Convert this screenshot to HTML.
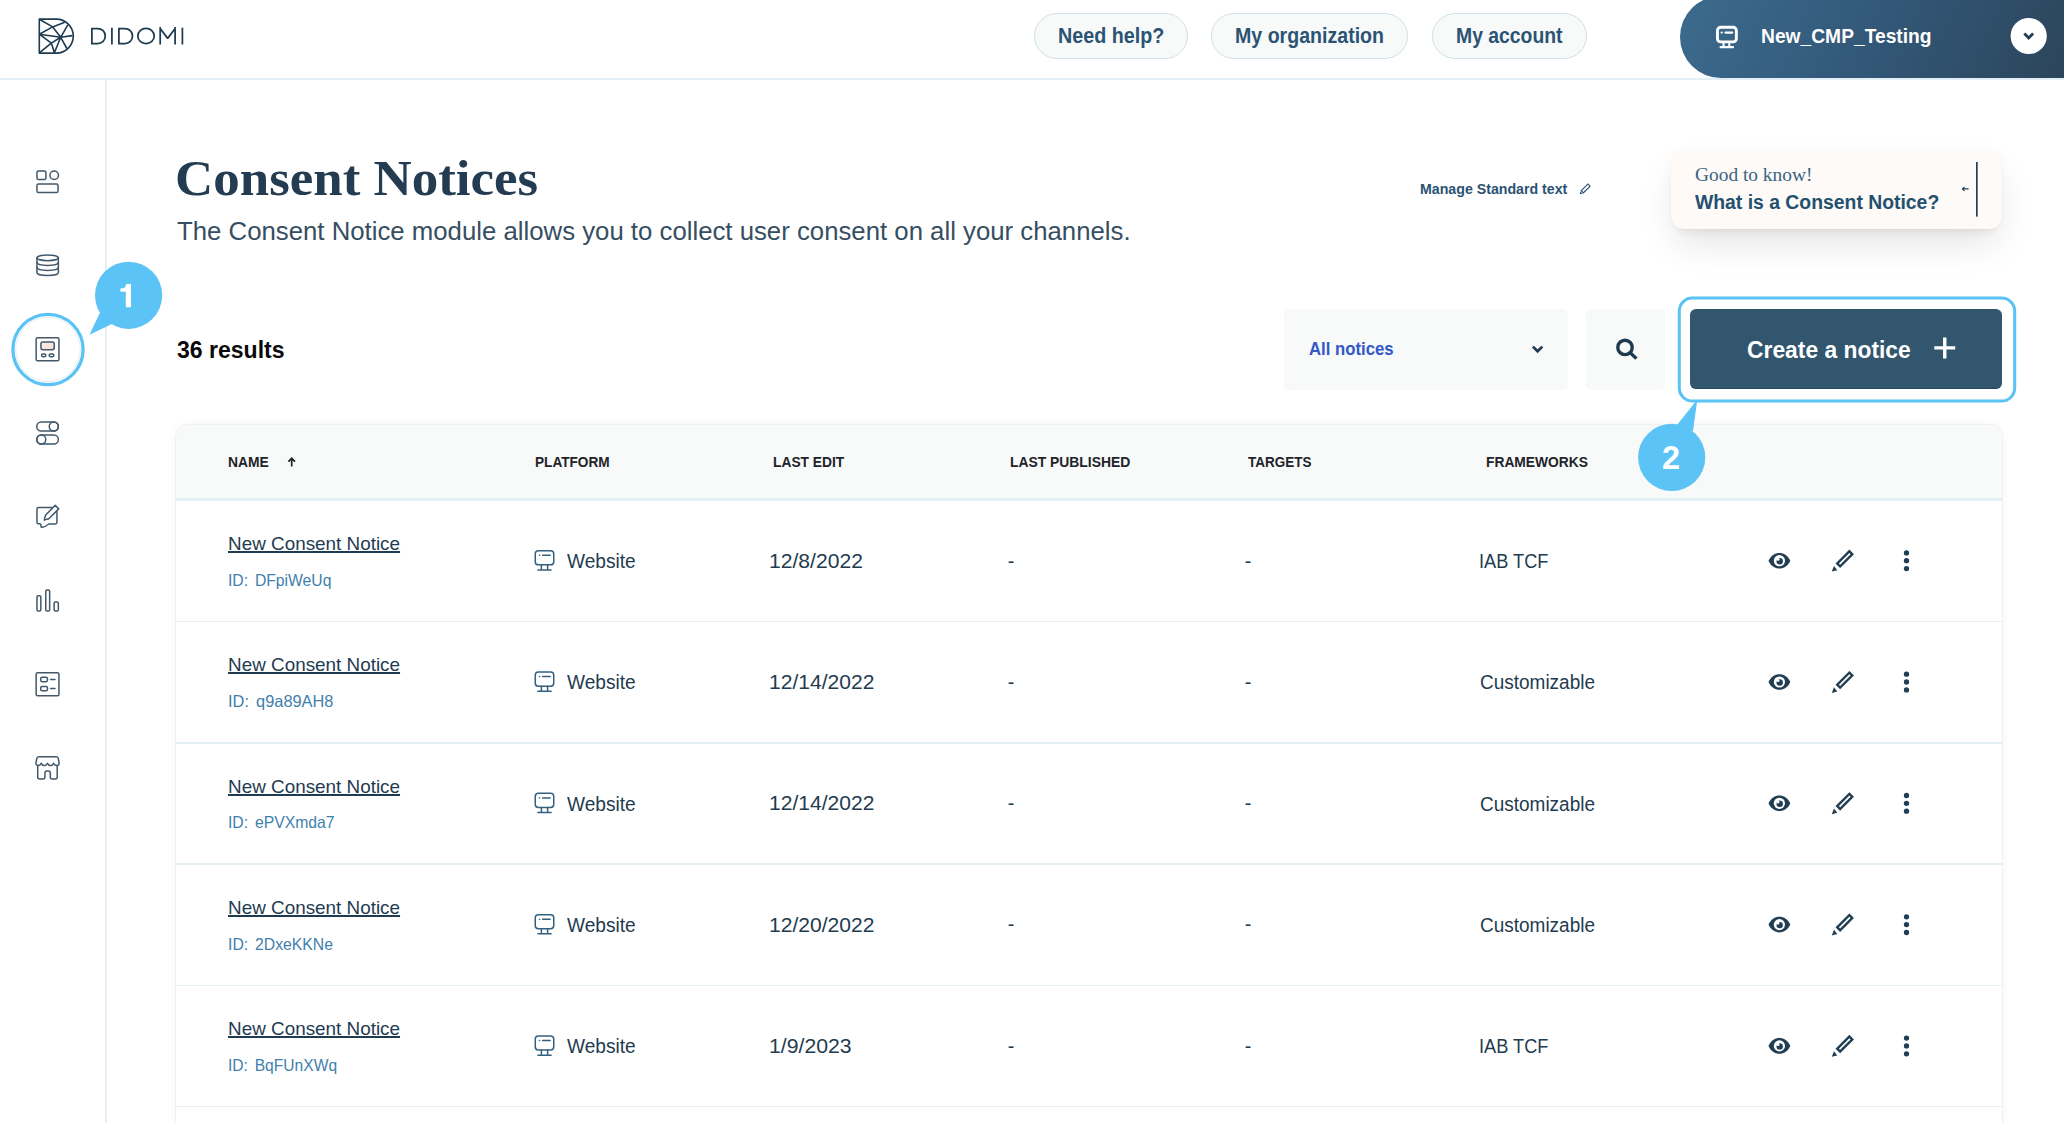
<!DOCTYPE html>
<html><head><meta charset="utf-8"><title>Consent Notices</title><style>
*{margin:0;padding:0;box-sizing:border-box}
html,body{width:2064px;height:1123px;overflow:hidden;background:#fff}
body{position:relative;font-family:"Liberation Sans",sans-serif}
.t{position:absolute;white-space:nowrap;transform-origin:0 0}
.b{position:absolute}
.ov{position:absolute;left:0;top:0;pointer-events:none}
</style></head>
<body>
<div class="b" style="left:0;top:77.5px;width:2064px;height:2px;background:#e3eff6"></div><div class="b" style="left:105.2px;top:79px;width:2px;height:1100px;background:#e6f0f6"></div><div class="b" style="left:1034px;top:13.2px;width:154.0px;height:45.8px;border:1.7px solid #d0e1ea;border-radius:23px;background:#f8fafa"></div><div class="b" style="left:1211.2px;top:13.2px;width:197.3px;height:45.8px;border:1.7px solid #d0e1ea;border-radius:23px;background:#f8fafa"></div><div class="b" style="left:1432.2px;top:13.2px;width:155.0px;height:45.8px;border:1.7px solid #d0e1ea;border-radius:23px;background:#f8fafa"></div><div class="b" style="left:1679.7px;top:-4px;width:400px;height:81.5px;border-radius:41px 0 0 41px;background:linear-gradient(115deg,#3c6b8e 0%,#33597a 45%,#2b4459 100%)"></div><div class="b" style="left:1671px;top:149.3px;width:331px;height:80px;border-radius:13px;background:#fdfaf8;box-shadow:0 18px 36px -6px rgba(30,30,30,0.13),0 6px 10px -4px rgba(0,0,0,0.08),0 0 2px rgba(0,0,0,0.03)"></div><div class="b" style="left:1284px;top:308.6px;width:284.3px;height:81px;border-radius:6px;background:#f8f9f9;box-shadow:0 0 1px rgba(0,0,0,0.06)"></div><div class="b" style="left:1586.2px;top:308.6px;width:79px;height:81px;border-radius:6px;background:#f8f9f9;box-shadow:0 0 1px rgba(0,0,0,0.06)"></div><div class="b" style="left:1690px;top:308.8px;width:312px;height:80.2px;border-radius:6px;background:#33566f;box-shadow:inset 0 -1px 0 rgba(20,50,80,0.35)"></div><div class="b" style="left:175.6px;top:425.3px;width:1826.6px;height:800px;border-radius:13px;background:#fff;box-shadow:0 0 0 1px rgba(0,0,0,0.035),0 0 8px rgba(0,0,0,0.06)"></div><div class="b" style="left:175.6px;top:425.3px;width:1826.6px;height:73px;border-radius:13px 13px 0 0;background:#f8f9f9"></div><div class="b" style="left:175.6px;top:498.2px;width:1826.6px;height:2.4px;background:#e3eff6"></div><div class="b" style="left:175.6px;top:620.60px;width:1826.6px;height:1.7px;background:#e3eef5"></div><div class="b" style="left:175.6px;top:741.90px;width:1826.6px;height:1.7px;background:#e3eef5"></div><div class="b" style="left:175.6px;top:863.20px;width:1826.6px;height:1.7px;background:#e3eef5"></div><div class="b" style="left:175.6px;top:984.50px;width:1826.6px;height:1.7px;background:#e3eef5"></div><div class="b" style="left:175.6px;top:1105.80px;width:1826.6px;height:1.7px;background:#e3eef5"></div>
<div id="h_help" class="t" style="left:1058.19px;top:25.31px;font-size:21.6px;line-height:21.6px;font-family:'Liberation Sans', sans-serif;font-weight:700;color:#2b5373;transform:scaleX(0.9130);">Need help?</div><div id="h_org" class="t" style="left:1235.21px;top:25.31px;font-size:21.6px;line-height:21.6px;font-family:'Liberation Sans', sans-serif;font-weight:700;color:#2b5373;transform:scaleX(0.9067);">My organization</div><div id="h_acc" class="t" style="left:1455.79px;top:25.31px;font-size:21.6px;line-height:21.6px;font-family:'Liberation Sans', sans-serif;font-weight:700;color:#2b5373;transform:scaleX(0.8967);">My account</div><div id="h_cmp" class="t" style="left:1760.61px;top:25.74px;font-size:20.5px;line-height:20.5px;font-family:'Liberation Sans', sans-serif;font-weight:700;color:#ffffff;transform:scaleX(0.9379);">New_CMP_Testing</div><div id="title" class="t" style="left:174.86px;top:152.81px;font-size:50.5px;line-height:50.5px;font-family:'Liberation Serif', serif;font-weight:700;color:#233c51;transform:scaleX(1.0482);">Consent Notices</div><div id="sub" class="t" style="left:177.22px;top:218.22px;font-size:26.2px;line-height:26.2px;font-family:'Liberation Sans', sans-serif;font-weight:400;color:#364e61;transform:scaleX(0.9836);">The Consent Notice module allows you to collect user consent on all your channels.</div><div id="manage" class="t" style="left:1420.22px;top:181.40px;font-size:15px;line-height:15px;font-family:'Liberation Sans', sans-serif;font-weight:700;color:#2b5272;transform:scaleX(0.9451);">Manage Standard text</div><div id="gtk" class="t" style="left:1694.63px;top:165.56px;font-size:18.8px;line-height:18.8px;font-family:'Liberation Serif', serif;font-weight:400;color:#3b6282;transform:scaleX(1.0321);">Good to know!</div><div id="what" class="t" style="left:1695.09px;top:191.71px;font-size:20.3px;line-height:20.3px;font-family:'Liberation Sans', sans-serif;font-weight:700;color:#24506f;transform:scaleX(0.9547);">What is a Consent Notice?</div><div id="results" class="t" style="left:177.46px;top:337.81px;font-size:24.2px;line-height:24.2px;font-family:'Liberation Sans', sans-serif;font-weight:700;color:#0a0a0a;transform:scaleX(0.9521);">36 results</div><div id="allnot" class="t" style="left:1308.70px;top:340.24px;font-size:18.5px;line-height:18.5px;font-family:'Liberation Sans', sans-serif;font-weight:700;color:#3157c8;transform:scaleX(0.9035);">All notices</div><div id="create" class="t" style="left:1747.36px;top:338.56px;font-size:23.2px;line-height:23.2px;font-family:'Liberation Sans', sans-serif;font-weight:700;color:#ffffff;transform:scaleX(0.9850);">Create a notice</div><div id="th_name" class="t" style="left:228.22px;top:454.52px;font-size:14.5px;line-height:14.5px;font-family:'Liberation Sans', sans-serif;font-weight:700;color:#1e2429;transform:scaleX(0.9562);">NAME</div><div id="th_plat" class="t" style="left:535.20px;top:454.52px;font-size:14.5px;line-height:14.5px;font-family:'Liberation Sans', sans-serif;font-weight:700;color:#1e2429;transform:scaleX(0.9393);">PLATFORM</div><div id="th_edit" class="t" style="left:773.02px;top:454.52px;font-size:14.5px;line-height:14.5px;font-family:'Liberation Sans', sans-serif;font-weight:700;color:#1e2429;transform:scaleX(0.9513);">LAST EDIT</div><div id="th_pub" class="t" style="left:1010.27px;top:454.52px;font-size:14.5px;line-height:14.5px;font-family:'Liberation Sans', sans-serif;font-weight:700;color:#1e2429;transform:scaleX(0.9567);">LAST PUBLISHED</div><div id="th_tgt" class="t" style="left:1248.15px;top:454.52px;font-size:14.5px;line-height:14.5px;font-family:'Liberation Sans', sans-serif;font-weight:700;color:#1e2429;transform:scaleX(0.9297);">TARGETS</div><div id="th_fw" class="t" style="left:1485.71px;top:454.52px;font-size:14.5px;line-height:14.5px;font-family:'Liberation Sans', sans-serif;font-weight:700;color:#1e2429;transform:scaleX(0.9509);">FRAMEWORKS</div><div id="r0_name" class="t" style="left:227.90px;top:533.91px;font-size:19.0px;line-height:19.0px;font-family:'Liberation Sans', sans-serif;font-weight:400;color:#1f3b51;transform:scaleX(0.9934);text-decoration:underline;text-decoration-thickness:1.6px;text-underline-offset:1.2px;">New Consent Notice</div><div id="r0_id" class="t" style="left:227.72px;top:571.63px;font-size:16.5px;line-height:16.5px;font-family:'Liberation Sans', sans-serif;font-weight:400;color:#3f7fad;transform:scaleX(0.9519);word-spacing:2.6px;">ID: DFpiWeUq</div><div id="r0_web" class="t" style="left:567.27px;top:551.92px;font-size:19.7px;line-height:19.7px;font-family:'Liberation Sans', sans-serif;font-weight:400;color:#233b4f;transform:scaleX(0.9706);">Website</div><div id="r0_date" class="t" style="left:769.46px;top:551.62px;font-size:19.7px;line-height:19.7px;font-family:'Liberation Sans', sans-serif;font-weight:400;color:#233b4f;transform:scaleX(1.0725);">12/8/2022</div><div id="r0_d1" class="t" style="left:1007.80px;top:551.52px;font-size:19.7px;line-height:19.7px;font-family:'Liberation Sans', sans-serif;font-weight:400;color:#233b4f;">-</div><div id="r0_d2" class="t" style="left:1244.70px;top:551.52px;font-size:19.7px;line-height:19.7px;font-family:'Liberation Sans', sans-serif;font-weight:400;color:#233b4f;">-</div><div id="r0_fw" class="t" style="left:1479.35px;top:552.12px;font-size:19.7px;line-height:19.7px;font-family:'Liberation Sans', sans-serif;font-weight:400;color:#233b4f;transform:scaleX(0.9237);">IAB TCF</div><div id="r1_name" class="t" style="left:227.90px;top:655.21px;font-size:19.0px;line-height:19.0px;font-family:'Liberation Sans', sans-serif;font-weight:400;color:#1f3b51;transform:scaleX(0.9934);text-decoration:underline;text-decoration-thickness:1.6px;text-underline-offset:1.2px;">New Consent Notice</div><div id="r1_id" class="t" style="left:227.69px;top:692.93px;font-size:16.5px;line-height:16.5px;font-family:'Liberation Sans', sans-serif;font-weight:400;color:#3f7fad;transform:scaleX(0.9926);word-spacing:2.6px;">ID: q9a89AH8</div><div id="r1_web" class="t" style="left:567.27px;top:673.22px;font-size:19.7px;line-height:19.7px;font-family:'Liberation Sans', sans-serif;font-weight:400;color:#233b4f;transform:scaleX(0.9706);">Website</div><div id="r1_date" class="t" style="left:769.46px;top:672.92px;font-size:19.7px;line-height:19.7px;font-family:'Liberation Sans', sans-serif;font-weight:400;color:#233b4f;transform:scaleX(1.0695);">12/14/2022</div><div id="r1_d1" class="t" style="left:1007.80px;top:672.82px;font-size:19.7px;line-height:19.7px;font-family:'Liberation Sans', sans-serif;font-weight:400;color:#233b4f;">-</div><div id="r1_d2" class="t" style="left:1244.70px;top:672.82px;font-size:19.7px;line-height:19.7px;font-family:'Liberation Sans', sans-serif;font-weight:400;color:#233b4f;">-</div><div id="r1_fw" class="t" style="left:1479.88px;top:673.42px;font-size:19.7px;line-height:19.7px;font-family:'Liberation Sans', sans-serif;font-weight:400;color:#233b4f;transform:scaleX(0.9642);">Customizable</div><div id="r2_name" class="t" style="left:227.90px;top:776.51px;font-size:19.0px;line-height:19.0px;font-family:'Liberation Sans', sans-serif;font-weight:400;color:#1f3b51;transform:scaleX(0.9934);text-decoration:underline;text-decoration-thickness:1.6px;text-underline-offset:1.2px;">New Consent Notice</div><div id="r2_id" class="t" style="left:227.72px;top:814.23px;font-size:16.5px;line-height:16.5px;font-family:'Liberation Sans', sans-serif;font-weight:400;color:#3f7fad;transform:scaleX(0.9528);word-spacing:2.6px;">ID: ePVXmda7</div><div id="r2_web" class="t" style="left:567.27px;top:794.52px;font-size:19.7px;line-height:19.7px;font-family:'Liberation Sans', sans-serif;font-weight:400;color:#233b4f;transform:scaleX(0.9706);">Website</div><div id="r2_date" class="t" style="left:769.46px;top:794.22px;font-size:19.7px;line-height:19.7px;font-family:'Liberation Sans', sans-serif;font-weight:400;color:#233b4f;transform:scaleX(1.0695);">12/14/2022</div><div id="r2_d1" class="t" style="left:1007.80px;top:794.12px;font-size:19.7px;line-height:19.7px;font-family:'Liberation Sans', sans-serif;font-weight:400;color:#233b4f;">-</div><div id="r2_d2" class="t" style="left:1244.70px;top:794.12px;font-size:19.7px;line-height:19.7px;font-family:'Liberation Sans', sans-serif;font-weight:400;color:#233b4f;">-</div><div id="r2_fw" class="t" style="left:1479.88px;top:794.72px;font-size:19.7px;line-height:19.7px;font-family:'Liberation Sans', sans-serif;font-weight:400;color:#233b4f;transform:scaleX(0.9642);">Customizable</div><div id="r3_name" class="t" style="left:227.90px;top:897.81px;font-size:19.0px;line-height:19.0px;font-family:'Liberation Sans', sans-serif;font-weight:400;color:#1f3b51;transform:scaleX(0.9934);text-decoration:underline;text-decoration-thickness:1.6px;text-underline-offset:1.2px;">New Consent Notice</div><div id="r3_id" class="t" style="left:227.72px;top:935.53px;font-size:16.5px;line-height:16.5px;font-family:'Liberation Sans', sans-serif;font-weight:400;color:#3f7fad;transform:scaleX(0.9554);word-spacing:2.6px;">ID: 2DxeKKNe</div><div id="r3_web" class="t" style="left:567.27px;top:915.82px;font-size:19.7px;line-height:19.7px;font-family:'Liberation Sans', sans-serif;font-weight:400;color:#233b4f;transform:scaleX(0.9706);">Website</div><div id="r3_date" class="t" style="left:769.47px;top:915.52px;font-size:19.7px;line-height:19.7px;font-family:'Liberation Sans', sans-serif;font-weight:400;color:#233b4f;transform:scaleX(1.0694);">12/20/2022</div><div id="r3_d1" class="t" style="left:1007.80px;top:915.42px;font-size:19.7px;line-height:19.7px;font-family:'Liberation Sans', sans-serif;font-weight:400;color:#233b4f;">-</div><div id="r3_d2" class="t" style="left:1244.70px;top:915.42px;font-size:19.7px;line-height:19.7px;font-family:'Liberation Sans', sans-serif;font-weight:400;color:#233b4f;">-</div><div id="r3_fw" class="t" style="left:1479.88px;top:916.02px;font-size:19.7px;line-height:19.7px;font-family:'Liberation Sans', sans-serif;font-weight:400;color:#233b4f;transform:scaleX(0.9642);">Customizable</div><div id="r4_name" class="t" style="left:227.90px;top:1019.11px;font-size:19.0px;line-height:19.0px;font-family:'Liberation Sans', sans-serif;font-weight:400;color:#1f3b51;transform:scaleX(0.9934);text-decoration:underline;text-decoration-thickness:1.6px;text-underline-offset:1.2px;">New Consent Notice</div><div id="r4_id" class="t" style="left:227.73px;top:1056.83px;font-size:16.5px;line-height:16.5px;font-family:'Liberation Sans', sans-serif;font-weight:400;color:#3f7fad;transform:scaleX(0.9452);word-spacing:2.6px;">ID: BqFUnXWq</div><div id="r4_web" class="t" style="left:567.27px;top:1037.12px;font-size:19.7px;line-height:19.7px;font-family:'Liberation Sans', sans-serif;font-weight:400;color:#233b4f;transform:scaleX(0.9706);">Website</div><div id="r4_date" class="t" style="left:769.45px;top:1036.82px;font-size:19.7px;line-height:19.7px;font-family:'Liberation Sans', sans-serif;font-weight:400;color:#233b4f;transform:scaleX(1.0785);">1/9/2023</div><div id="r4_d1" class="t" style="left:1007.80px;top:1036.72px;font-size:19.7px;line-height:19.7px;font-family:'Liberation Sans', sans-serif;font-weight:400;color:#233b4f;">-</div><div id="r4_d2" class="t" style="left:1244.70px;top:1036.72px;font-size:19.7px;line-height:19.7px;font-family:'Liberation Sans', sans-serif;font-weight:400;color:#233b4f;">-</div><div id="r4_fw" class="t" style="left:1479.35px;top:1037.32px;font-size:19.7px;line-height:19.7px;font-family:'Liberation Sans', sans-serif;font-weight:400;color:#233b4f;transform:scaleX(0.9237);">IAB TCF</div>
<svg class="ov" width="2064" height="1123" viewBox="0 0 2064 1123"><g fill="none" stroke="#1f3b50" stroke-width="1.6" stroke-linejoin="round"><path d="M39.3,19.1 H56.3 A17,17 0 0 1 56.3,53.1 H39.3 Z"/><path d="M39.30,19.30 L52.70,26.90 M52.70,26.90 L64.70,22.20 M39.30,34.20 L52.70,26.90 M52.70,26.90 L60.70,37.30 M67.80,24.90 L60.70,37.30 M39.30,34.20 L60.70,37.30 M60.70,37.30 L72.50,35.60 M39.30,34.20 L51.30,43.10 M51.30,43.10 L60.70,37.30 M39.30,52.90 L51.30,43.10 M51.30,43.10 L54.40,52.70 M60.70,37.30 L54.40,52.70 M60.70,37.30 L66.90,48.50"/></g><g fill="none" stroke="#1f3b50" stroke-width="1.75"><path d="M91.9,28.5 H97.7 A7.6,7.6 0 0 1 97.7,43.7 H91.9 Z"/><path d="M111.9,27.7 V44.5"/><path d="M118.9,28.5 H124.9 A7.6,7.6 0 0 1 124.9,43.7 H118.9 Z"/><ellipse cx="146" cy="36.1" rx="8.2" ry="7.6"/><path d="M160.2,44.4 V28.5 L167.65,38.4 L175.1,28.5 V44.4" stroke-linejoin="bevel"/><path d="M159.33,27.75 H161.05 M174.25,27.75 H175.97" stroke-width="1.5"/><path d="M182.4,27.7 V44.5"/></g><g fill="none" stroke="#42586a" stroke-width="1.5" stroke-linecap="round" stroke-linejoin="round"><rect x="36.95" y="171.05" width="9.0" height="8.5" rx="1.6"/><circle cx="54.2" cy="175.3" r="4.3"/><rect x="36.95" y="184.05" width="21.1" height="8.5" rx="1.6"/></g><g fill="none" stroke="#42586a" stroke-width="1.5" stroke-linecap="round" stroke-linejoin="round"><ellipse cx="47.65" cy="257.8" rx="10.7" ry="2.85"/><path d="M36.95,257.8 V272.7 A10.7,2.85 0 0 0 58.35,272.7 V257.8"/><path d="M36.95,262.6 A10.7,2.85 0 0 0 58.35,262.6"/><path d="M36.95,267.6 A10.7,2.85 0 0 0 58.35,267.6"/></g><circle cx="48" cy="349.5" r="35.1" fill="#fff" stroke="#5bc2f4" stroke-width="3.3"/><circle cx="48" cy="349.5" r="32.3" fill="none" stroke="#dfeef8" stroke-width="1"/><defs><linearGradient id="pk" x1="0" y1="0" x2="1" y2="1"><stop offset="0" stop-color="#fdf1ec"/><stop offset="1" stop-color="#f5d9cf"/></linearGradient></defs><g fill="none" stroke="#42586a" stroke-width="1.5" stroke-linecap="round" stroke-linejoin="round"><rect x="36.15" y="337.75" width="22.8" height="23" rx="1.6"/><rect x="40.95" y="341.95" width="13.3" height="7.7" rx="1.8" fill="url(#pk)"/><rect x="41.55" y="353.95" width="4.3" height="2.7" rx="1.35"/><rect x="49.15" y="353.95" width="4.7" height="2.7" rx="1.35"/></g><g fill="none" stroke="#42586a" stroke-width="1.5" stroke-linecap="round" stroke-linejoin="round"><rect x="36.75" y="421.95" width="21.6" height="9.1" rx="4.55"/><circle cx="53.8" cy="426.5" r="4.55"/><rect x="36.75" y="434.95" width="21.6" height="9.0" rx="4.5"/><circle cx="41.3" cy="439.45" r="4.5"/></g><g fill="none" stroke="#42586a" stroke-width="1.5" stroke-linecap="round" stroke-linejoin="round"><path d="M52.2,507.55 H38.6 Q36.95,507.55 36.95,509.2 V522.2 Q36.95,523.85 38.6,523.85 H40.2 Q41.4,524.2 40.9,525.7 Q40.6,527.3 42.6,527.2 Q44.5,527 49,524 H55.3 Q56.95,523.85 56.95,522.2 V511.6"/><path d="M55.2,505.4 L58.7,508.9 L49.3,518.3 Q48.3,519.1 46.8,519.2 Q45.6,519.5 44.3,520.1 Q44.6,518.6 44.9,517.2 Q45.2,515.8 46.1,514.5 Z"/></g><g fill="none" stroke="#42586a" stroke-width="1.5" stroke-linecap="round" stroke-linejoin="round"><rect x="36.95" y="595.75" width="3.9" height="15.2" rx="1.3"/><rect x="45.75" y="589.95" width="3.9" height="21" rx="1.3"/><rect x="54.15" y="601.95" width="4.2" height="9" rx="1.3"/></g><g fill="none" stroke="#42586a" stroke-width="1.5" stroke-linecap="round" stroke-linejoin="round"><rect x="36.15" y="672.75" width="22.8" height="23" rx="1.6"/><rect x="40.75" y="677.15" width="6.7" height="4.5" rx="1.3"/><path d="M50.5,679.4 H55"/><rect x="40.75" y="686.55" width="6.7" height="4.3" rx="1.3"/><path d="M50.5,688.4 H55"/></g><g fill="none" stroke="#42586a" stroke-width="1.5" stroke-linecap="round" stroke-linejoin="round"><path d="M38.8,756.75 H56.4 Q58,756.9 58.3,758.6 L59.1,763 Q59.3,765.2 57,765.4 Q54.6,765.8 53.6,763.3 Q52.6,765.7 50.5,765.6 Q48.3,765.6 47.4,763.3 Q46.4,765.6 44.3,765.6 Q42.1,765.7 41.2,763.3 Q40.2,765.8 37.8,765.4 Q35.7,765.1 35.9,763 L36.8,758.6 Q37.1,756.9 38.8,756.75 Z"/><path d="M37.7,765.4 V777 Q37.7,778.95 39.6,778.95 H43 Q44.95,778.95 44.95,777 V772.8 Q44.95,770.95 46.9,770.95 H48.4 Q50.3,770.95 50.3,772.8 V777 Q50.3,778.95 52.2,778.95 H55.4 Q57.2,778.95 57.2,777 V765.4"/></g><g fill="none" stroke="#fff" stroke-linecap="round"><rect x="1717.45" y="27.25" width="18.9" height="14.6" rx="3.2" stroke-width="2.9"/><path d="M1721.6,32.6 h0.1 M1725.4,32.6 H1732.2" stroke-width="2.2"/><path d="M1723.5,43 V46.3 M1729.3,43 V46.3" stroke-width="2" stroke-linecap="butt"/><path d="M1720.6,47.2 H1733" stroke-width="2.2"/></g><circle cx="2028.7" cy="36" r="18.1" fill="#fff"/><path d="M2024.3,33.4 L2028.7,37.9 L2033.1,33.4" fill="none" stroke="#233d52" stroke-width="2.8" stroke-linecap="butt" stroke-linejoin="miter"/><g transform="translate(1585.2,188.9) rotate(-45)"><rect x="-4.2" y="-1.5" width="9.6" height="3.0" fill="none" stroke="#2b5272" stroke-width="1.15"/><path d="M-5.3,-1.7 L-5.3,1.7 L-7.6,0 Z" fill="#2b5272"/></g><path d="M1968.6,188.9 H1962.4 M1964.5,186.9 L1962.4,188.9 L1964.5,190.9" fill="none" stroke="#233d52" stroke-width="1.1"/><rect x="1976" y="162" width="1.7" height="54.6" fill="#23405a"/><path d="M1532.9,346.6 L1537.6,351.3 L1542.3,346.6" fill="none" stroke="#1f3a4e" stroke-width="2.7"/><g fill="none" stroke="#1f3a4e" stroke-width="3.4"><circle cx="1625" cy="347.4" r="7.2"/><path d="M1630.3,352.7 L1636.4,358.6"/></g><path d="M291.7,466.6 V458.6 M288.4,461.7 L291.7,458.3 L295,461.7" fill="none" stroke="#1e2429" stroke-width="1.7"/><path d="M1934.3,347.9 H1955.2 M1944.75,337.4 V358.4" stroke="#fff" stroke-width="3.4"/><rect x="1679.3" y="298.1" width="335.4" height="102.9" rx="13" fill="none" stroke="#5bc2f4" stroke-width="3"/><circle cx="128.6" cy="295.3" r="33.6" fill="#5bc3f5"/><path d="M100.5,311.5 L89.5,334.8 L113,323.5 Z" fill="#5bc3f5"/><circle cx="1671.7" cy="457.4" r="33.6" fill="#5bc3f5"/><path d="M1677,425 L1697.3,399.5 L1693,431 Z" fill="#5bc3f5"/><g fill="none" stroke="#34607f" stroke-width="1.5" stroke-linecap="round"><rect x="535.25" y="550.75" width="18.50" height="14.10" rx="3.2"/><path d="M539.45,555.30 h0.1 M542.65,555.30 H550.15"/><path d="M541.40,564.85 V569.95 M547.60,564.85 V569.95 M537.90,569.95 H551.10"/></g><path d="M1768.50,560.70 C1772.90,550.30 1785.90,550.30 1790.30,560.70 C1785.90,571.10 1772.90,571.10 1768.50,560.70 Z" fill="#223e53"/><circle cx="1779.40" cy="560.70" r="5.6" fill="#fff"/><circle cx="1779.70" cy="561.20" r="3.2" fill="#223e53"/><circle cx="1777.90" cy="559.20" r="1.6" fill="#fff"/><g transform="translate(1844.60,558.95) rotate(-45)"><rect x="-8.4" y="-2.05" width="17.2" height="4.1" fill="none" stroke="#223e53" stroke-width="2.4"/><path d="M-12.5,-2.6 L-13.1,2.8 L-18.0,-0.1 Z" fill="#223e53"/></g><circle cx="1906.5" cy="552.90" r="2.65" fill="#223e53"/><circle cx="1906.5" cy="560.70" r="2.65" fill="#223e53"/><circle cx="1906.5" cy="568.60" r="2.65" fill="#223e53"/><g fill="none" stroke="#34607f" stroke-width="1.5" stroke-linecap="round"><rect x="535.25" y="672.05" width="18.50" height="14.10" rx="3.2"/><path d="M539.45,676.60 h0.1 M542.65,676.60 H550.15"/><path d="M541.40,686.15 V691.25 M547.60,686.15 V691.25 M537.90,691.25 H551.10"/></g><path d="M1768.50,682.00 C1772.90,671.60 1785.90,671.60 1790.30,682.00 C1785.90,692.40 1772.90,692.40 1768.50,682.00 Z" fill="#223e53"/><circle cx="1779.40" cy="682.00" r="5.6" fill="#fff"/><circle cx="1779.70" cy="682.50" r="3.2" fill="#223e53"/><circle cx="1777.90" cy="680.50" r="1.6" fill="#fff"/><g transform="translate(1844.60,680.25) rotate(-45)"><rect x="-8.4" y="-2.05" width="17.2" height="4.1" fill="none" stroke="#223e53" stroke-width="2.4"/><path d="M-12.5,-2.6 L-13.1,2.8 L-18.0,-0.1 Z" fill="#223e53"/></g><circle cx="1906.5" cy="674.20" r="2.65" fill="#223e53"/><circle cx="1906.5" cy="682.00" r="2.65" fill="#223e53"/><circle cx="1906.5" cy="689.90" r="2.65" fill="#223e53"/><g fill="none" stroke="#34607f" stroke-width="1.5" stroke-linecap="round"><rect x="535.25" y="793.35" width="18.50" height="14.10" rx="3.2"/><path d="M539.45,797.90 h0.1 M542.65,797.90 H550.15"/><path d="M541.40,807.45 V812.55 M547.60,807.45 V812.55 M537.90,812.55 H551.10"/></g><path d="M1768.50,803.30 C1772.90,792.90 1785.90,792.90 1790.30,803.30 C1785.90,813.70 1772.90,813.70 1768.50,803.30 Z" fill="#223e53"/><circle cx="1779.40" cy="803.30" r="5.6" fill="#fff"/><circle cx="1779.70" cy="803.80" r="3.2" fill="#223e53"/><circle cx="1777.90" cy="801.80" r="1.6" fill="#fff"/><g transform="translate(1844.60,801.55) rotate(-45)"><rect x="-8.4" y="-2.05" width="17.2" height="4.1" fill="none" stroke="#223e53" stroke-width="2.4"/><path d="M-12.5,-2.6 L-13.1,2.8 L-18.0,-0.1 Z" fill="#223e53"/></g><circle cx="1906.5" cy="795.50" r="2.65" fill="#223e53"/><circle cx="1906.5" cy="803.30" r="2.65" fill="#223e53"/><circle cx="1906.5" cy="811.20" r="2.65" fill="#223e53"/><g fill="none" stroke="#34607f" stroke-width="1.5" stroke-linecap="round"><rect x="535.25" y="914.65" width="18.50" height="14.10" rx="3.2"/><path d="M539.45,919.20 h0.1 M542.65,919.20 H550.15"/><path d="M541.40,928.75 V933.85 M547.60,928.75 V933.85 M537.90,933.85 H551.10"/></g><path d="M1768.50,924.60 C1772.90,914.20 1785.90,914.20 1790.30,924.60 C1785.90,935.00 1772.90,935.00 1768.50,924.60 Z" fill="#223e53"/><circle cx="1779.40" cy="924.60" r="5.6" fill="#fff"/><circle cx="1779.70" cy="925.10" r="3.2" fill="#223e53"/><circle cx="1777.90" cy="923.10" r="1.6" fill="#fff"/><g transform="translate(1844.60,922.85) rotate(-45)"><rect x="-8.4" y="-2.05" width="17.2" height="4.1" fill="none" stroke="#223e53" stroke-width="2.4"/><path d="M-12.5,-2.6 L-13.1,2.8 L-18.0,-0.1 Z" fill="#223e53"/></g><circle cx="1906.5" cy="916.80" r="2.65" fill="#223e53"/><circle cx="1906.5" cy="924.60" r="2.65" fill="#223e53"/><circle cx="1906.5" cy="932.50" r="2.65" fill="#223e53"/><g fill="none" stroke="#34607f" stroke-width="1.5" stroke-linecap="round"><rect x="535.25" y="1035.95" width="18.50" height="14.10" rx="3.2"/><path d="M539.45,1040.50 h0.1 M542.65,1040.50 H550.15"/><path d="M541.40,1050.05 V1055.15 M547.60,1050.05 V1055.15 M537.90,1055.15 H551.10"/></g><path d="M1768.50,1045.90 C1772.90,1035.50 1785.90,1035.50 1790.30,1045.90 C1785.90,1056.30 1772.90,1056.30 1768.50,1045.90 Z" fill="#223e53"/><circle cx="1779.40" cy="1045.90" r="5.6" fill="#fff"/><circle cx="1779.70" cy="1046.40" r="3.2" fill="#223e53"/><circle cx="1777.90" cy="1044.40" r="1.6" fill="#fff"/><g transform="translate(1844.60,1044.15) rotate(-45)"><rect x="-8.4" y="-2.05" width="17.2" height="4.1" fill="none" stroke="#223e53" stroke-width="2.4"/><path d="M-12.5,-2.6 L-13.1,2.8 L-18.0,-0.1 Z" fill="#223e53"/></g><circle cx="1906.5" cy="1038.10" r="2.65" fill="#223e53"/><circle cx="1906.5" cy="1045.90" r="2.65" fill="#223e53"/><circle cx="1906.5" cy="1053.80" r="2.65" fill="#223e53"/></svg>
<div class="t" style="left:0;top:0"></div>
<svg class="ov" width="2064" height="1123"><path d="M126.3,284 H131 V307.2 H125.8 V291.7 H121.4 Q120.3,291.7 120.3,290.5 V289.4 Q120.3,288.2 121.5,288.2 H123.6 Q125.2,288 126.3,284 Z" fill="#fff"/></svg><div class="t" style="left:1662px;top:441.5px;font-size:32.5px;line-height:32px;font-weight:700;color:#fff;font-family:'Liberation Sans',sans-serif">2</div></body></html>
